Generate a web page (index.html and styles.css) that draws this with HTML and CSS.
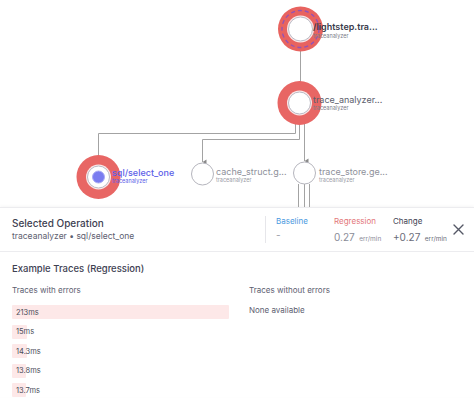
FILE: index.html
```html
<!DOCTYPE html>
<html>
<head>
<meta charset="utf-8">
<link rel="stylesheet" href="styles.css">
</head>
<body>
<div class="graph">
  <svg class="graph-svg" width="474" height="207" viewBox="0 0 474 207">
    <defs>
      <marker id="arr" markerWidth="6" markerHeight="6" refX="3" refY="5" orient="auto" markerUnits="userSpaceOnUse">
        <path d="M0.5 1 L5.5 1 L3 5 Z" fill="#8a8a8a"/>
      </marker>
    </defs>
    <g class="edges" fill="none" stroke="#a3a3a3" stroke-width="1">
      <path d="M300.5 42 V91" marker-end="url(#arr)"/>
      <path d="M295.5 114 V133.5 H98.5 V163" marker-end="url(#arr)"/>
      <path d="M299.5 115 V139.5 H202.5 V162" marker-end="url(#arr)"/>
      <path d="M304.5 115 V161" marker-end="url(#arr)"/>
      <path d="M298.5 184 V207"/>
      <path d="M304.5 184 V207"/>
      <path d="M309.5 184 V207"/>
    </g>
    <!-- node 1 -->
    <circle cx="300.5" cy="29" r="22.5" fill="#e8635f"/>
    <circle cx="300.5" cy="29" r="18.5" fill="none" stroke="#7a4fd0" stroke-width="1.3" stroke-dasharray="4 3" opacity="0.8"/>
    <circle cx="300.5" cy="29" r="13.5" fill="#fff" opacity="0.85"/>
    <circle cx="300.5" cy="29" r="12" fill="#fff" stroke="#b9b9c4" stroke-width="1"/>
    <!-- node 2 -->
    <circle cx="299.5" cy="103" r="22" fill="#e86664"/>
    <circle cx="299.5" cy="103" r="12.5" fill="#fff" opacity="0.85"/>
    <circle cx="299.5" cy="103" r="11" fill="#fff" stroke="#b9b9c4" stroke-width="1"/>
    <!-- node 3 -->
    <circle cx="98.5" cy="177" r="22" fill="#e86664"/>
    <circle cx="98.5" cy="177" r="12.5" fill="#fff" opacity="0.85"/>
    <circle cx="98.5" cy="177" r="11" fill="#fff" stroke="#b9b9c4" stroke-width="1"/>
    <circle cx="98.5" cy="177" r="6" fill="#7a7cf0" stroke="#a9abf5" stroke-width="1"/>
    <!-- node 4 -->
    <circle cx="202.5" cy="174" r="11" fill="#fff" stroke="#b5b5bd" stroke-width="1"/>
    <!-- node 5 -->
    <circle cx="304.5" cy="173" r="11" fill="#fff" stroke="#b5b5bd" stroke-width="1"/>
    <!-- labels -->
    <g class="labels">
      <text x="313" y="30" class="n-name n-dark">/lightstep.tra...</text>
      <text x="313" y="38" class="n-sub">traceanalyzer</text>
      <text x="313" y="103" class="n-name n-mid">trace_analyzer...</text>
      <text x="313" y="110" class="n-sub">traceanalyzer</text>
      <text x="112" y="176" class="n-name n-blue">sql/select_one</text>
      <text x="112" y="183" class="n-sub n-sub-blue">traceanalyzer</text>
      <text x="216" y="175" class="n-name n-light">cache_struct.g...</text>
      <text x="216" y="182" class="n-sub n-sub-light">traceanalyzer</text>
      <text x="319" y="175" class="n-name n-light">trace_store.ge...</text>
      <text x="319" y="182" class="n-sub n-sub-light">traceanalyzer</text>
    </g>
  </svg>
</div>
<section class="panel">
  <header class="panel-head">
    <div class="op">
      <div class="op-title">Selected Operation</div>
      <div class="op-sub">traceanalyzer • sql/select_one</div>
    </div>
    <div class="metrics">
      <div class="metric m-w1">
        <div class="m-label m-baseline">Baseline</div>
        <div class="m-value m-dash">-</div>
      </div>
      <div class="metric m-w2">
        <div class="m-label m-regression">Regression</div>
        <div class="m-value"><span class="m-num">0.27</span> <span class="m-unit">err/min</span></div>
      </div>
      <div class="metric m-w3">
        <div class="m-label m-change">Change</div>
        <div class="m-value m-value-dark"><span class="m-num">+0.27</span> <span class="m-unit">err/min</span></div>
      </div>
    </div>
    <button class="close" aria-label="Close">
      <svg width="11" height="11" viewBox="0 0 11 11"><path d="M1 1 L10 10 M10 1 L1 10" stroke="#555866" stroke-width="1.4" fill="none" stroke-linecap="round"/></svg>
    </button>
  </header>
  <div class="panel-body">
    <h2 class="section-title">Example Traces (Regression)</h2>
    <div class="cols">
      <div class="col">
        <div class="col-title">Traces with errors</div>
        <div class="trace-list">
          <div class="trace"><div class="bar" style="width:217px"></div><span class="t-label">213ms</span></div>
          <div class="trace"><div class="bar" style="width:15px"></div><span class="t-label">15ms</span></div>
          <div class="trace"><div class="bar" style="width:15px"></div><span class="t-label">14.3ms</span></div>
          <div class="trace"><div class="bar" style="width:14px"></div><span class="t-label">13.8ms</span></div>
          <div class="trace"><div class="bar" style="width:14px"></div><span class="t-label">13.7ms</span></div>
        </div>
      </div>
      <div class="col">
        <div class="col-title">Traces without errors</div>
        <div class="none">None available</div>
      </div>
    </div>
  </div>
</section>
</body>
</html>
```
FILE: styles.css
```css
html, body {
  margin: 0;
  padding: 0;
  background: #fff;
}
body {
  width: 474px;
  height: 405px;
  overflow: hidden;
  font-family: Inter, "Noto Sans", "Liberation Sans", sans-serif;
  color: #3e4152;
}
.graph {
  height: 207px;
  position: relative;
}
.graph-svg {
  display: block;
}
.n-name {
  font-family: Inter, "Liberation Sans", sans-serif;
  font-size: 9px;
}
.n-dark { fill: #3a3c4c; font-weight: 600; }
.n-mid { fill: #5c5e6c; }
.n-blue { fill: #5b5ee8; font-weight: 500; }
.n-light { fill: #8e909a; }
.n-sub {
  font-family: Inter, "Liberation Sans", sans-serif;
  font-size: 5.5px;
  fill: #7b7d88;
}
.n-sub-blue { fill: #5b5ee8; }
.n-sub-light { fill: #9a9ca5; }

.panel {
  border-top: 1px solid #ececef;
  box-shadow: 0 -1px 3px rgba(0,0,0,0.04);
}
.panel-head {
  display: flex;
  align-items: center;
  height: 43px;
  padding: 0 10px 0 12px;
  border-bottom: 1px solid #ececef;
}
.op {
  flex: 1;
}
.op-title {
  font-size: 10px;
  font-weight: 500;
  line-height: 14px;
  color: #3e4152;
}
.op-sub {
  font-size: 8.5px;
  line-height: 13px;
  color: #5d6070;
}
.metrics {
  display: flex;
  border-left: 1px solid #e6e6ea;
  padding-left: 10px;
  height: 27px;
  align-items: flex-start;
}
.m-w1 { width: 58px; }
.m-w2 { width: 59px; }
.m-w3 { width: 51px; }
.m-label {
  font-size: 8px;
  line-height: 11px;
}
.m-baseline { color: #4a9ae0; }
.m-regression { color: #e3777a; }
.m-change { color: #3e4152; }
.m-value {
  margin-top: 2px;
  line-height: 12px;
  color: #8a8c98;
  white-space: nowrap;
}
.m-value-dark { color: #6a6c78; }
.m-dash { font-size: 10px; color: #9a9ca6; }
.m-num { font-size: 10px; }
.m-unit { font-size: 6.5px; }
.close {
  border: 0;
  background: none;
  padding: 0;
  margin-left: 9px;
  width: 11px;
  height: 11px;
  display: flex;
  align-items: center;
  justify-content: center;
}
.panel-body {
  padding: 10px 12px 0;
}
.section-title {
  margin: 0;
  font-size: 9.5px;
  font-weight: 500;
  line-height: 14px;
  color: #3e4152;
}
.cols {
  display: grid;
  grid-template-columns: 225px 1fr;
  column-gap: 12px;
  margin-top: 8px;
}
.col-title {
  font-size: 8px;
  line-height: 12px;
  color: #5d6070;
}
.trace-list {
  margin-top: 9px;
  display: flex;
  flex-direction: column;
  gap: 5.5px;
}
.trace {
  position: relative;
  height: 14px;
  display: flex;
  align-items: center;
}
.bar {
  position: absolute;
  left: 0;
  top: 0;
  height: 14px;
  background: #fde8e8;
  border-radius: 1px;
}
.t-label {
  position: relative;
  padding-left: 4px;
  font-size: 7.5px;
  color: #4a4c58;
}
.none {
  margin-top: 8px;
  font-size: 8px;
  line-height: 12px;
  color: #5d6070;
}
```
